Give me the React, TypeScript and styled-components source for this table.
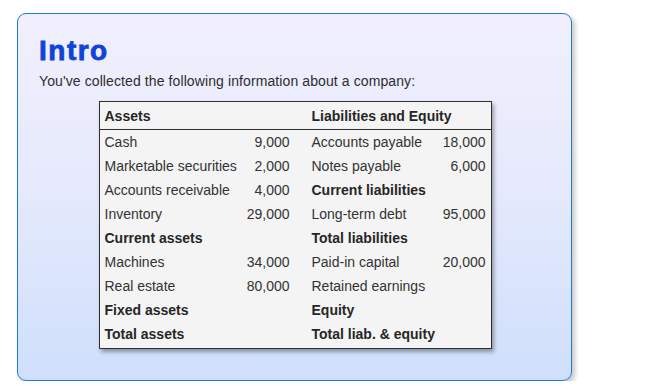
import styled, { createGlobalStyle } from "styled-components";

const GlobalStyle = createGlobalStyle`
  body {
    margin: 0;
    background: #ffffff;
    font-family: "Liberation Sans", Arial, sans-serif;
  }
`;

const Panel = styled.section`
  box-sizing: border-box;
  margin: 13px 0 0 17px;
  width: 555px;
  height: 368px;
  padding: 22px 20px 0 21px;
  border: 1px solid #1b7dcc;
  border-radius: 9px;
  background: linear-gradient(180deg, #f1effd 0%, #e6eafc 45%, #cfdffb 100%);
  box-shadow: 3px 3px 5px rgba(0, 0, 0, 0.22);
`;

const Title = styled.h1`
  margin: 0;
  font-size: 28px;
  line-height: 30px;
  font-weight: 700;
  letter-spacing: 1.5px;
  color: #1044d6;
  -webkit-text-stroke: 0.8px #1044d6;
`;

const Lead = styled.p`
  margin: 6px 0 0;
  font-size: 14px;
  line-height: 18px;
  letter-spacing: 0.1px;
  color: #2e2e2e;
`;

const Sheet = styled.div`
  box-sizing: border-box;
  margin: 11px auto 0;
  width: 393px;
  padding-bottom: 2px;
  border: 1px solid #2f2f2f;
  background: #f4f4f4;
  box-shadow: 2px 3px 4px rgba(0, 0, 0, 0.35);
  display: grid;
  grid-template-columns: 144px 51px 138px 58px;
`;

const Head = styled.div<{ $span?: number; $indent?: boolean }>`
  grid-column: span ${(p) => p.$span ?? 1};
  height: 27px;
  display: flex;
  align-items: center;
  padding-left: ${(p) => (p.$indent ? "17px" : "5px")};
  border-bottom: 1px solid #2f2f2f;
  font-size: 14px;
  font-weight: 700;
  color: #262626;
`;

const Cell = styled.div<{ $bold?: boolean; $num?: boolean; $indent?: boolean }>`
  height: 24px;
  display: flex;
  align-items: center;
  justify-content: ${(p) => (p.$num ? "flex-end" : "flex-start")};
  padding: 0 ${(p) => (p.$num ? "5px" : "0")} 0
    ${(p) => (p.$num ? "0" : p.$indent ? "17px" : "5px")};
  font-size: 14px;
  font-weight: ${(p) => (p.$bold ? 700 : 400)};
  color: ${(p) => (p.$bold ? "#262626" : "#333333")};
  white-space: nowrap;
`;

type Line = [string, string, boolean];

const assets: Line[] = [
  ["Cash", "9,000", false],
  ["Marketable securities", "2,000", false],
  ["Accounts receivable", "4,000", false],
  ["Inventory", "29,000", false],
  ["Current assets", "", true],
  ["Machines", "34,000", false],
  ["Real estate", "80,000", false],
  ["Fixed assets", "", true],
  ["Total assets", "", true],
];

const claims: Line[] = [
  ["Accounts payable", "18,000", false],
  ["Notes payable", "6,000", false],
  ["Current liabilities", "", true],
  ["Long-term debt", "95,000", false],
  ["Total liabilities", "", true],
  ["Paid-in capital", "20,000", false],
  ["Retained earnings", "", false],
  ["Equity", "", true],
  ["Total liab. & equity", "", true],
];

export default function App() {
  return (
    <>
      <GlobalStyle />
      <Panel>
        <Title>Intro</Title>
        <Lead>You've collected the following information about a company:</Lead>
        <Sheet>
          <Head $span={2}>Assets</Head>
          <Head $span={2} $indent>
            Liabilities and Equity
          </Head>
          {assets.map((a, i) => {
            const c = claims[i];
            return [
              <Cell key={`a${i}`} $bold={a[2]}>
                {a[0]}
              </Cell>,
              <Cell key={`av${i}`} $num>
                {a[1]}
              </Cell>,
              <Cell key={`c${i}`} $bold={c[2]} $indent>
                {c[0]}
              </Cell>,
              <Cell key={`cv${i}`} $num>
                {c[1]}
              </Cell>,
            ];
          })}
        </Sheet>
      </Panel>
    </>
  );
}
